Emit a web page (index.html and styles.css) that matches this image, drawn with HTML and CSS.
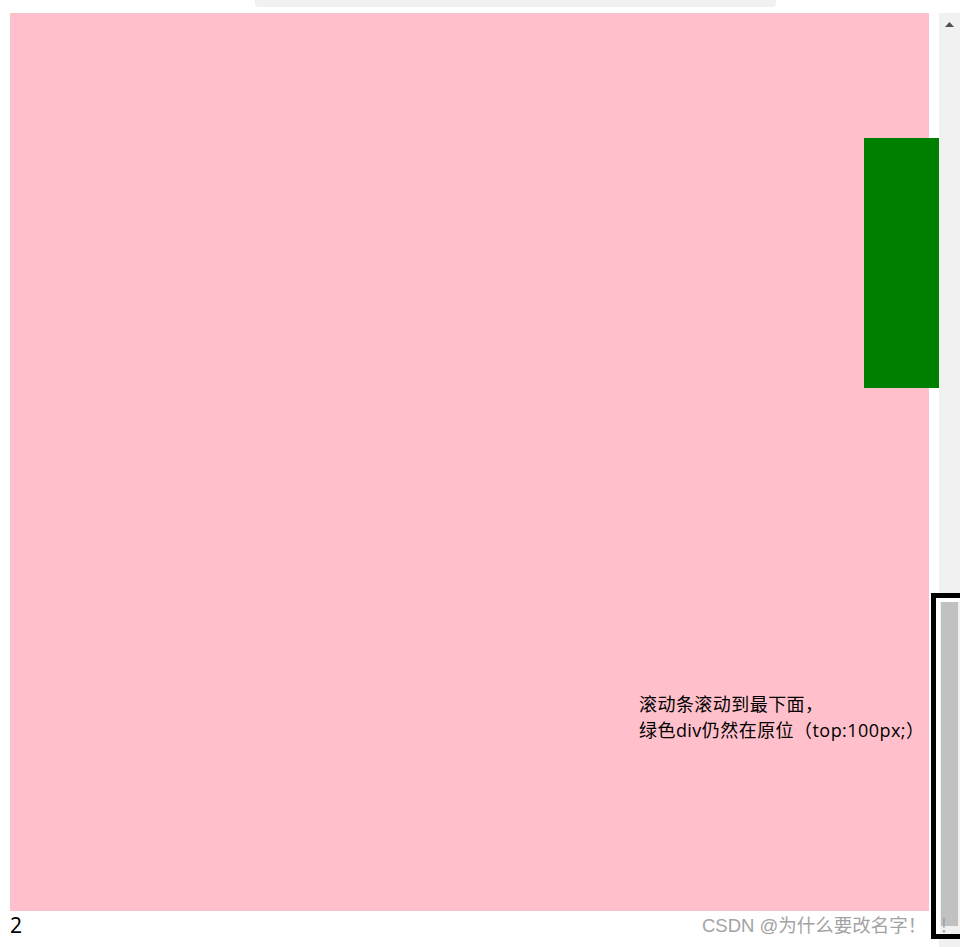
FILE: index.html
```html
<!DOCTYPE html>
<html>
<head>
<meta charset="utf-8">
<link rel="stylesheet" href="styles.css">
</head>
<body>
<div class="page">
  <div class="main">
    <div class="pink">
      <p class="note">滚动条滚动到最下面，<br>绿色div仍然在原位（top:100px;）</p>
    </div>
    <div class="foot">2</div>
  </div>
  <div class="track">
    <svg class="arrow" width="9" height="5" viewBox="0 0 9 5"><polygon points="4.5,0 9,5 0,5" fill="#505050"/></svg>
    <div class="thumb"></div>
  </div>
</div>
<div class="topbar"></div>
<div class="fixed-box"></div>
<div class="mark"></div>
<div class="watermark">CSDN @为什么要改名字<span class="gap">！</span>！</div>
</body>
</html>
```
FILE: styles.css
```css
html, body {
  margin: 0;
  padding: 0;
}
body {
  width: 960px;
  height: 947px;
  overflow: hidden;
  position: relative;
  background: #fff;
  font-family: "Noto Sans CJK SC", "Noto Sans", sans-serif;
}
.page {
  display: flex;
}
.main {
  width: 939px;
  padding: 13px 0 0 10px;
  box-sizing: border-box;
}
.pink {
  width: 919px;
  height: 898px;
  background: #ffc0cb;
  padding: 678px 0 0 629px;
  box-sizing: border-box;
}
.note {
  margin: 0;
  font-family: "Open Sans", "Noto Sans CJK SC", sans-serif;
  font-size: 18px;
  line-height: 26px;
  letter-spacing: 0.45px;
  color: #000;
  white-space: nowrap;
}
.foot {
  font-family: "Noto Sans", sans-serif;
  font-size: 21px;
  line-height: 28px;
  color: #000;
}
.track {
  width: 21px;
  height: 934px;
  margin-top: 13px;
  background: #f1f1f1;
  display: flex;
  flex-direction: column;
}
.arrow {
  display: block;
  margin: 9px 0 0 6px;
}
.thumb {
  margin: 575px 0 0 2px;
  width: 17px;
  height: 324px;
  background: #c1c1c1;
}
.topbar {
  position: absolute;
  left: 255px;
  top: 0;
  width: 521px;
  height: 7px;
  background: #f1f1f1;
  border-radius: 0 0 4px 4px;
}
.fixed-box {
  position: absolute;
  left: 864px;
  top: 138px;
  width: 75px;
  height: 250px;
  background: #008000;
}
.mark {
  position: absolute;
  left: 931px;
  top: 593px;
  width: 30px;
  height: 336px;
  border: 5px solid #000;
  box-shadow: inset 4px 4px 0 #fff;
}
.watermark {
  position: absolute;
  left: 702px;
  top: 914px;
  font-family: "Liberation Sans Narrow", "Liberation Sans", "Noto Sans CJK SC", sans-serif;
  font-size: 18.5px;
  line-height: 24px;
  color: #a3a3a3;
  white-space: nowrap;
}
.gap {
  letter-spacing: 13px;
}
```
